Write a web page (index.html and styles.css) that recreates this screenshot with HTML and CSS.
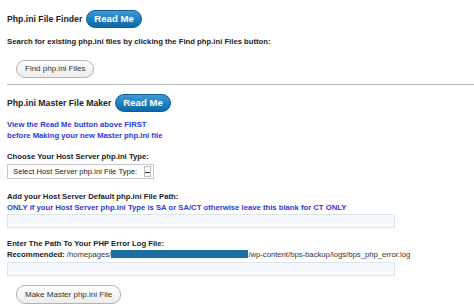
FILE: index.html
```html
<!DOCTYPE html>
<html lang="en">
<head>
    <meta charset="UTF-8">
    <title>Php.ini File Manager</title>
    <link rel="stylesheet" href="styles.css">
</head>
<body>
    <div class="page">
        <div class="title">Php.ini File Finder <span class="readme">Read Me</span></div>
        <div class="label search-label">Search for existing php.ini files by clicking the Find php.ini Files button:</div>
        <div class="btn find-btn">Find php.ini Files</div>

        <div class="rule"></div>

        <div class="title maker-title">Php.ini Master File Maker <span class="readme">Read Me</span></div>
        <div class="note">View the Read Me button above FIRST<br>before Making your new Master php.ini file</div>

        <div class="label choose-label">Choose Your Host Server php.ini Type:</div>
        <div class="select">
            <span>Select Host Server php.ini File Type:</span>
            <span class="arrow"></span>
        </div>

        <div class="label add-label">Add your Host Server Default php.ini File Path:</div>
        <div class="label blue">ONLY if your Host Server php.ini Type is SA or SA/CT otherwise leave this blank for CT ONLY</div>
        <div class="field"></div>

        <div class="label enter-label">Enter The Path To Your PHP Error Log File:</div>
        <div class="label recommended">Recommended: <span class="plain">/homepages/<span class="mask"></span>/wp-content/bps-backup/logs/bps_php_error.log</span></div>
        <div class="field"></div>

        <div class="btn make-btn">Make Master php.ini File</div>
    </div>
</body>
</html>
```

FILE: styles.css
```css
body {
    margin: 0;
    background-color: #fff;
    font-family: "Liberation Sans", Arial, sans-serif;
    color: #222;
}
.page {
    padding: 10px 0 0 7px;
    display: flex;
    flex-direction: column;
    align-items: flex-start;
}
.title {
    font-size: 8.7px;
    font-weight: bold;
    height: 18px;
    line-height: 18px;
    display: flex;
    align-items: center;
    gap: 4px;
}
.readme {
    display: inline-block;
    height: 16px;
    line-height: 16px;
    padding: 0 7px;
    border-radius: 9px;
    background: linear-gradient(#3c9ad8, #0a68a8);
    border: 1px solid #0b5d95;
    color: #fff;
    font-size: 9.6px;
    font-weight: bold;
}
.label {
    font-size: 7.7px;
    font-weight: bold;
    line-height: 11px;
}
.search-label {
    margin-top: 8px;
}
.btn {
    margin-left: 9px;
    height: 16px;
    line-height: 16px;
    padding: 0 8px;
    border: 1px solid #b4b4b4;
    border-radius: 9px;
    background: linear-gradient(#fff, #ececec);
    color: #333;
    font-size: 8px;
}
.find-btn {
    margin-top: 13px;
}
.rule {
    align-self: stretch;
    margin-top: 6px;
    border-top: 1px solid #b8b8b8;
}
.maker-title {
    margin-top: 9px;
}
.note {
    margin-top: 7px;
    font-size: 7.7px;
    font-weight: bold;
    line-height: 11px;
    color: #2d3ad9;
}
.choose-label {
    margin-top: 10px;
}
.select {
    margin-top: 2px;
    width: 138px;
    height: 13px;
    border: 1px solid #c8c8c8;
    display: flex;
    align-items: center;
    justify-content: space-between;
    padding: 0 2px 0 5px;
    font-size: 7.7px;
    color: #222;
}
.select .arrow {
    width: 5px;
    height: 9px;
    border: 1px solid #bbb;
    background: linear-gradient(to bottom, #fff 55%, #333 55%, #333 72%, #fff 72%);
}
.add-label {
    margin-top: 12px;
}
.blue {
    color: #2d3ad9;
}
.field {
    margin-top: 1px;
    width: 386px;
    height: 12px;
    border: 1px solid #dde6ee;
    background-color: #f4f8fc;
}
.enter-label {
    margin-top: 10px;
}
.recommended + .field {
    margin-top: 2px;
}
.plain {
    font-weight: normal;
    color: #333;
}
.mask {
    display: inline-block;
    width: 137px;
    height: 8px;
    vertical-align: -1px;
    background-color: #1a6fa3;
}
.make-btn {
    margin-top: 9px;
    height: 17px;
    line-height: 17px;
}
```
